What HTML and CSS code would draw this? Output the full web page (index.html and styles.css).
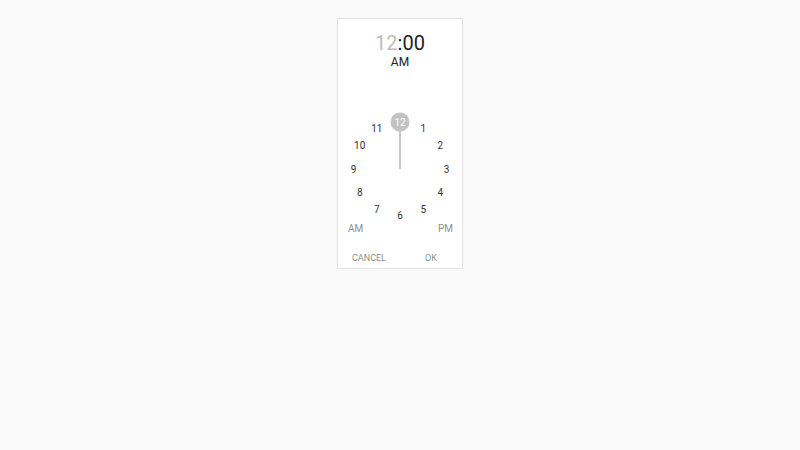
FILE: index.html
```html
<!DOCTYPE html>
<html>
<head>
<meta charset="utf-8">
<link rel="stylesheet" href="styles.css">
</head>
<body>
<div class="card">
  <div class="header">
    <div class="time"><span class="hour">12</span>:00</div>
    <div class="period">AM</div>
  </div>
  <div class="clock">
    <div class="hand"></div>
    <span class="num" style="left:85.25px;top:13.23px">1</span>
    <span class="num" style="left:102.27px;top:30.25px">2</span>
    <span class="num" style="left:108.5px;top:53.5px">3</span>
    <span class="num" style="left:102.27px;top:76.75px">4</span>
    <span class="num" style="left:85.25px;top:93.77px">5</span>
    <span class="num" style="left:62px;top:100px">6</span>
    <span class="num" style="left:38.75px;top:93.77px">7</span>
    <span class="num" style="left:21.73px;top:76.75px">8</span>
    <span class="num" style="left:15.5px;top:53.5px">9</span>
    <span class="num" style="left:21.73px;top:30.25px">10</span>
    <span class="num" style="left:38.75px;top:13.23px">11</span>
    <span class="num selected" style="left:62px;top:7px">12</span>
  </div>
  <div class="ampm">
    <span>AM</span>
    <span>PM</span>
  </div>
  <div class="actions">
    <span class="btn">CANCEL</span>
    <span class="btn">OK</span>
  </div>
</div>
</body>
</html>
```
FILE: styles.css
```css
html, body {
  margin: 0;
  padding: 0;
  background: #fafafa;
  font-family: Roboto, "Liberation Sans", sans-serif;
}
.card {
  width: 124px;
  margin: 18px auto 0;
  background: #fff;
  border: 1px solid #e3e3e3;
  box-shadow: 0 0 1px rgba(0,0,0,0.06);
  display: flex;
  flex-direction: column;
}
.header {
  padding-top: 13px;
  text-align: center;
  color: #212121;
}
.time {
  font-size: 20px;
  line-height: 22px;
}
.hour {
  color: #bdbdbd;
}
.period {
  margin-top: 1px;
  font-size: 12px;
  line-height: 14px;
}
.clock {
  position: relative;
  margin-top: 46px;
  height: 107px;
}
.hand {
  position: absolute;
  left: 61px;
  top: 7px;
  width: 2px;
  height: 46.5px;
  background: #c8c8c8;
}
.num {
  position: absolute;
  transform: translate(-50%, calc(-50% + 1px));
  font-size: 10px;
  line-height: 12px;
  color: #333;
  white-space: nowrap;
}
.num.selected {
  transform: translate(-50%, -50%);
  width: 19px;
  height: 19px;
  line-height: 19px;
  border-radius: 50%;
  background: #c2c2c2;
  color: #fff;
  text-align: center;
}
.ampm {
  margin-top: 1px;
  display: flex;
  justify-content: space-between;
  padding: 0 9px 0 10px;
  font-size: 10px;
  line-height: 12px;
  color: #8f8f8f;
}
.actions {
  display: flex;
  padding: 18px 0 4px;
}
.btn {
  flex: 1;
  text-align: center;
  font-size: 9px;
  line-height: 11px;
  color: #8f8f8f;
}
```
